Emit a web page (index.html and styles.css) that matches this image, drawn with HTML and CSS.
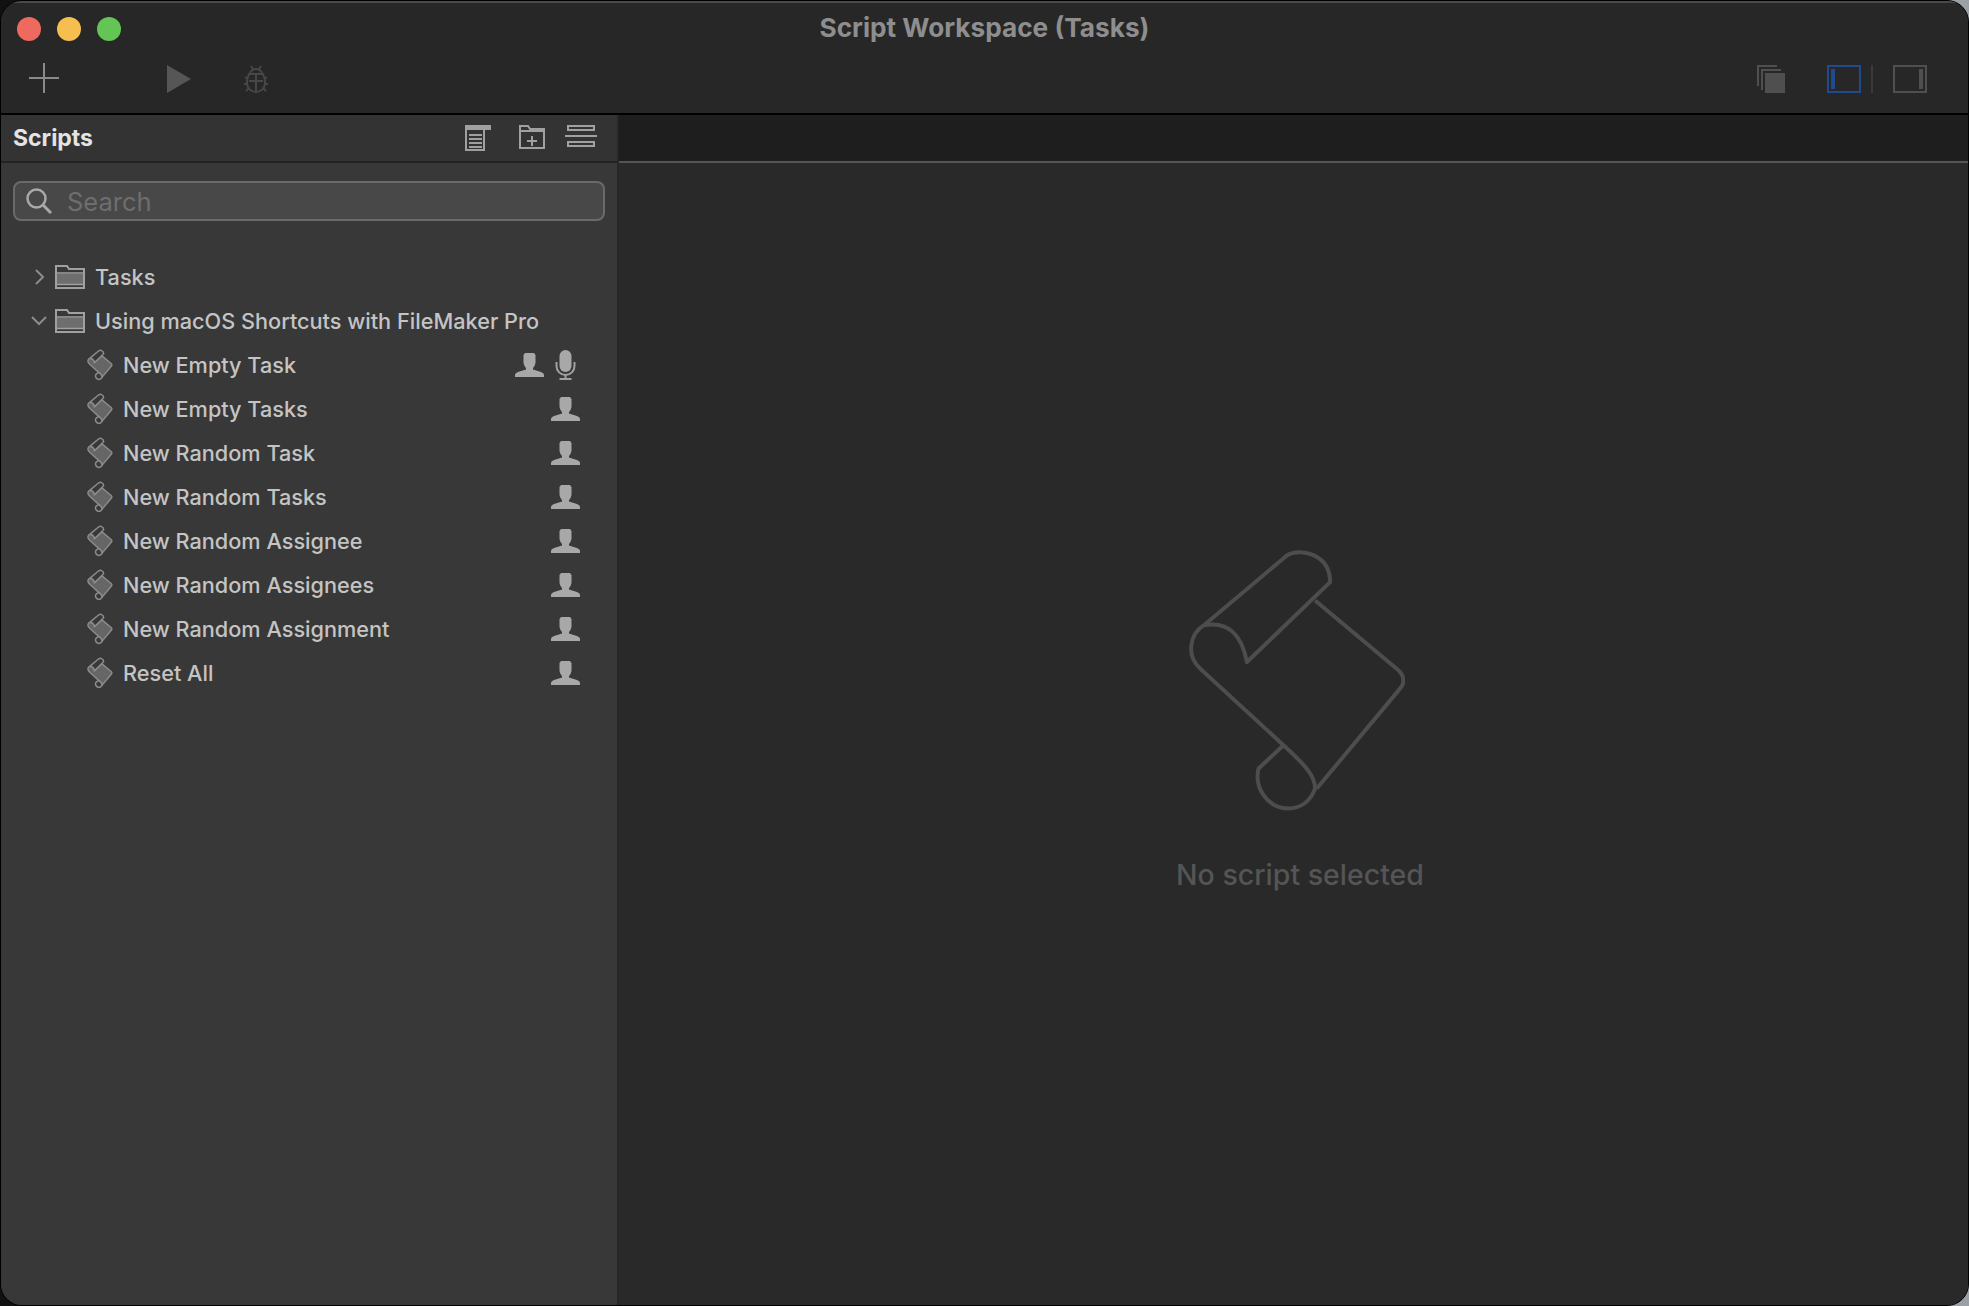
FILE: index.html
```html
<!DOCTYPE html>
<html lang="en">
<head>
<meta charset="utf-8">
<title>Script Workspace (Tasks)</title>
<link rel="stylesheet" href="styles.css">
</head>
<body>
<svg class="defs" aria-hidden="true">
  <symbol id="person" viewBox="0 0 29 24">
    <path d="M10 0h9l1.500 2v8l-1 3-1.500 2v1.500l8 2.500 2.500 1.500.5 1.500v2H0v-2l.5-1.500L3 19l8-2.500V15l-1.500-2-1-3V2z" fill="#a8a8a8"/>
  </symbol>
  <symbol id="mic" viewBox="0 0 29 30">
    <rect x="8.500" y="0" width="12" height="22" rx="6" fill="#a8a8a8"/>
    <path d="M5.500 12v4a9 9 0 0 0 18 0v-4" fill="none" stroke="#a0a0a0" stroke-width="2"/>
    <path d="M14.500 25v3M8.500 29h12" fill="none" stroke="#a0a0a0" stroke-width="2"/>
  </symbol>
  <symbol id="folder" viewBox="0 0 30 24">
    <path d="M1 23V1h11l2 3h15v19z" fill="#383838" stroke="#a0a0a0" stroke-width="2"/>
    <rect x="2" y="9" width="26" height="10" fill="#6e6e6e"/>
    <path d="M2 8h26M2 19.500h26" stroke="#a0a0a0" stroke-width="1.500"/>
  </symbol>
  <symbol id="scroll" viewBox="-20 -20 695 830">
    <path d="M45 225 295 15C325-5 425-5 425 95L175 340C165 260 120 215 45 225Z" fill="#383838" stroke="#8c8c8c" stroke-width="40" stroke-linejoin="round"/>
    <path d="M380 150 625 355C650 375 650 405 635 420L385 720C385 680 345 625 285 590L40 360C-10 320-5 240 45 225 120 215 165 260 175 340Z" fill="#666" stroke="#8c8c8c" stroke-width="38" stroke-linejoin="round"/>
    <path d="M285 590 210 660C195 720 240 780 300 780 340 780 370 750 385 720 385 680 345 625 285 590Z" fill="#383838" stroke="#8c8c8c" stroke-width="40" stroke-linejoin="round"/>
  </symbol>
</svg>
<div class="window">
  <header class="titlebar">
    <div class="lights">
      <span class="light light-red"></span>
      <span class="light light-yellow"></span>
      <span class="light light-green"></span>
    </div>
    <h1 class="title">Script Workspace (Tasks)</h1>
    <div class="toolbar">
      <svg class="tool-add" width="30" height="30" viewBox="0 0 30 30"><path d="M15 0v30M0 15h30" stroke="#8a8a8a" stroke-width="2"/></svg>
      <svg class="tool-play" width="24" height="28" viewBox="0 0 24 28"><path d="M0 0 24 14 0 28z" fill="#565656"/></svg>
      <svg class="tool-bug" width="24" height="28" viewBox="0 0 24 28" fill="none" stroke="#474747" stroke-width="2"><path d="M6 9a6 5 0 0 1 12 0zM5 9h14l2 6v3c0 5-4 9-9 9s-9-4-9-9v-3zM12 9v18M5 16h14M7 1l2 3M17 1l-2 3M1 12l3 2M23 12l-3 2M0 19h3M24 19h-3M2 26l3-3M22 26l-3-3"/></svg>
      <div class="tool-right">
        <svg class="tool-stack" width="28" height="28" viewBox="0 0 28 28"><path d="M1 21V1h19M5 25V5h19" fill="none" stroke="#4f4f4f" stroke-width="2"/><rect x="8" y="8" width="20" height="20" fill="#4f4f4f"/></svg>
        <svg class="tool-panel" width="34" height="28" viewBox="0 0 34 28"><rect x="1" y="1" width="32" height="26" fill="none" stroke="#1f4a8c" stroke-width="2"/><rect x="4" y="4" width="4" height="20" fill="#1f4a8c"/></svg>
        <span class="tool-divider"></span>
        <svg class="tool-panel-right" width="34" height="28" viewBox="0 0 34 28"><rect x="1" y="1" width="32" height="26" fill="none" stroke="#4f4f4f" stroke-width="2"/><rect x="26" y="4" width="4" height="20" fill="#4f4f4f"/></svg>
      </div>
    </div>
  </header>
  <div class="main">
    <aside class="sidebar">
      <div class="side-head">
        <h2 class="side-title">Scripts</h2>
        <svg class="head-doc" width="26" height="26" viewBox="0 0 26 26" fill="none" stroke="#a0a0a0" stroke-width="2"><path d="M1 1v24h18V1"/><rect x="0" y="0" width="26" height="5" fill="#a0a0a0" stroke="none"/><path d="M4 10h13M4 14h13M4 18h13M4 22h13"/></svg>
        <svg class="head-folder" width="26" height="24" viewBox="0 0 26 24" fill="none" stroke="#a0a0a0" stroke-width="2"><path d="M1 23V1h8l2 3h14v19zM2 6h22M8 16h10M13 11v10"/></svg>
        <svg class="head-list" width="32" height="22" viewBox="0 0 32 22" fill="none" stroke="#a0a0a0" stroke-width="2"><rect x="3" y="1" width="26" height="4"/><path d="M0 11h32"/><rect x="3" y="17" width="26" height="4"/></svg>
      </div>
      <div class="search">
        <svg class="search-icon" width="26" height="26" viewBox="0 0 26 26" fill="none" stroke="#a8a8a8"><circle cx="10.500" cy="10.500" r="9" stroke-width="2.500"/><path d="M17 17l8 8" stroke-width="3"/></svg>
        <span class="search-text">Search</span>
      </div>
      <ul class="tree">
        <li class="row group">
          <svg class="chev" width="16" height="16" viewBox="0 0 16 16"><path d="M5 1l7 7-7 7" fill="none" stroke="#8c8c8c" stroke-width="2"/></svg>
          <svg class="folder" width="30" height="24"><use href="#folder"/></svg>
          <span>Tasks</span>
        </li>
        <li class="row group">
          <svg class="chev" width="16" height="16" viewBox="0 0 16 16"><path d="M1 4l7 7 7-7" fill="none" stroke="#8c8c8c" stroke-width="2"/></svg>
          <svg class="folder" width="30" height="24"><use href="#folder"/></svg>
          <span>Using macOS Shortcuts with FileMaker Pro</span>
        </li>
        <li class="row script">
          <svg class="scrollicon" width="26" height="32"><use href="#scroll"/></svg>
          <span class="name">New Empty Task</span>
          <svg class="badge" width="29" height="24"><use href="#person"/></svg>
          <svg class="badge" width="29" height="30"><use href="#mic"/></svg>
        </li>
        <li class="row script">
          <svg class="scrollicon" width="26" height="32"><use href="#scroll"/></svg>
          <span class="name">New Empty Tasks</span>
          <svg class="badge" width="29" height="24"><use href="#person"/></svg>
        </li>
        <li class="row script">
          <svg class="scrollicon" width="26" height="32"><use href="#scroll"/></svg>
          <span class="name">New Random Task</span>
          <svg class="badge" width="29" height="24"><use href="#person"/></svg>
        </li>
        <li class="row script">
          <svg class="scrollicon" width="26" height="32"><use href="#scroll"/></svg>
          <span class="name">New Random Tasks</span>
          <svg class="badge" width="29" height="24"><use href="#person"/></svg>
        </li>
        <li class="row script">
          <svg class="scrollicon" width="26" height="32"><use href="#scroll"/></svg>
          <span class="name">New Random Assignee</span>
          <svg class="badge" width="29" height="24"><use href="#person"/></svg>
        </li>
        <li class="row script">
          <svg class="scrollicon" width="26" height="32"><use href="#scroll"/></svg>
          <span class="name">New Random Assignees</span>
          <svg class="badge" width="29" height="24"><use href="#person"/></svg>
        </li>
        <li class="row script">
          <svg class="scrollicon" width="26" height="32"><use href="#scroll"/></svg>
          <span class="name">New Random Assignment</span>
          <svg class="badge" width="29" height="24"><use href="#person"/></svg>
        </li>
        <li class="row script">
          <svg class="scrollicon" width="26" height="32"><use href="#scroll"/></svg>
          <span class="name">Reset All</span>
          <svg class="badge" width="29" height="24"><use href="#person"/></svg>
        </li>
      </ul>
    </aside>
    <section class="content">
      <div class="content-head"></div>
      <div class="empty">
        <svg class="empty-icon" width="218" height="264" viewBox="140 85 655 792" fill="none" stroke="#4d4d4d" stroke-width="12" stroke-linejoin="round">
          <path d="M190 320 440 110C480 85 570 105 570 190L320 430C305 350 265 305 190 320C150 345 135 410 180 450L430 680C490 735 525 770 525 810C510 850 480 870 445 870 385 870 340 810 355 750L430 680"/>
          <path d="M525 245 770 450C795 470 795 495 780 510L530 810"/>
        </svg>
        <p class="empty-text">No script selected</p>
      </div>
    </section>
  </div>
</div>
</body>
</html>
```

FILE: styles.css
```css
* { box-sizing: border-box; }
html, body { margin: 0; padding: 0; height: 100%; }
body {
  background: linear-gradient(135deg, #111 0 50%, #9aa0a6 50%);
  overflow: hidden;
  font-family: Inter, "Liberation Sans", sans-serif;
}
.defs { display: none; }
.window {
  width: 1969px;
  height: 1306px;
  display: flex;
  flex-direction: column;
  border: 1px solid #000;
  border-radius: 22px;
  overflow: hidden;
  background: #272727;
}
.titlebar {
  position: relative;
  height: 114px;
  flex: none;
  background: #272727;
  border-top: 2px solid #4a4a4a;
  border-bottom: 2px solid #000;
  padding-top: 0;
}
.lights {
  display: flex;
  gap: 16px;
  padding: 14px 0 0 16px;
}
.light { width: 24px; height: 24px; border-radius: 50%; }
.light-red { background: #ee6a5f; }
.light-yellow { background: #f5be4f; }
.light-green { background: #62c554; }
.title {
  position: absolute;
  top: 0;
  left: 0;
  right: 0;
  margin: 0;
  height: 50px;
  line-height: 50px;
  text-align: center;
  font-size: 26.200px;
  font-weight: 700;
  color: #8e8e8e;
}
.toolbar {
  display: flex;
  align-items: flex-end;
  height: 30px;
  margin-top: 22px;
  padding-left: 28px;
}
.tool-play { margin-left: 108px; }
.tool-bug { margin-left: 53px; }
.tool-right {
  display: flex;
  align-items: center;
  margin-left: auto;
  padding-right: 41px;
}
.tool-panel { margin-left: 42px; }
.tool-divider { width: 2px; height: 28px; margin: 0 20px 0 10px; background: #3a3a3a; }
.main { flex: 1; display: flex; min-height: 0; }
.sidebar {
  width: 618px;
  flex: none;
  background: #383838;
  border-right: 2px solid #262626;
}
.side-head {
  display: flex;
  align-items: flex-start;
  height: 48px;
  padding: 10px 0 0 12px;
  background: #333;
  border-bottom: 2px solid #222;
}
.side-title {
  margin: 0 auto 0 0;
  line-height: 26px;
  font-size: 23px;
  font-weight: 700;
  color: #e4e4e4;
}
.head-folder { margin: 0 20px 0 28px; }
.head-list { margin-right: 20px; }
.search {
  display: flex;
  align-items: center;
  width: 592px;
  height: 40px;
  margin: 18px 0 34px 12px;
  padding-left: 11px;
  background: #484848;
  border: 2px solid #6a6a6a;
  border-radius: 8px;
}
.search-text { margin-left: 15px; font-size: 25.500px; color: #6e6e6e; }
.tree { list-style: none; margin: 0; padding: 0; }
.row {
  display: flex;
  align-items: center;
  height: 44px;
  font-size: 21.700px;
  font-weight: 500;
  color: #c4c4c4;
}
.group { padding-left: 30px; }
.chev { flex: none; }
.folder { flex: none; margin: 0 10px 0 8px; }
.script { padding: 0 37px 0 86px; gap: 7px; }
.scrollicon { flex: none; margin-right: 3px; }
.name { margin-right: auto; }
.badge { flex: none; }
.content { flex: 1; display: flex; flex-direction: column; background: #292929; }
.content-head {
  height: 48px;
  flex: none;
  background: #1e1e1e;
  border-bottom: 2px solid #555;
}
.empty {
  flex: 1;
  display: flex;
  flex-direction: column;
  align-items: center;
  padding: 384px 0 0 5px;
}
.empty-text {
  margin: 46px 0 0 8px;
  font-size: 28.500px;
  font-weight: 500;
  color: #555;
}
```
